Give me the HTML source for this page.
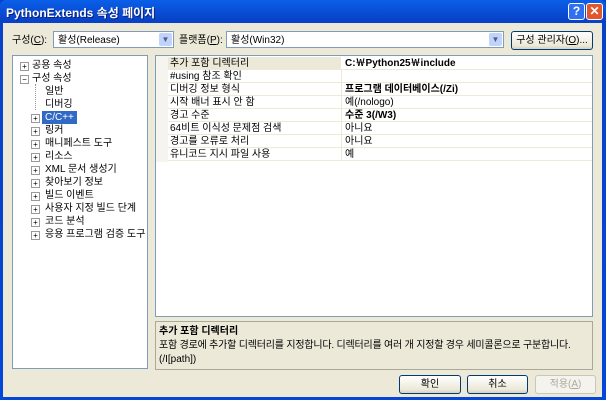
<!DOCTYPE html>
<html><head><meta charset="utf-8"><style>
*{box-sizing:border-box;margin:0;padding:0}
body{width:606px;height:400px;overflow:hidden;font:10px "Liberation Sans","Noto Sans CJK KR",sans-serif;color:#000;background:#0842c8}
.win{position:absolute;left:0;top:0;width:606px;height:400px;background:linear-gradient(#0a5fe8,#0842c8 20px,#0446d8);border-radius:6px 6px 0 0}
.title{position:absolute;left:6px;top:4px;color:#fff;font-weight:bold;font-size:12px;text-shadow:1px 1px #0a1f7a}
.tb{position:absolute;top:3px;width:17px;height:17px;border:1px solid #fff;border-radius:3px;color:#fff;font-weight:bold;text-align:center;line-height:15px;font-size:12px}
.body{position:absolute;left:3px;top:23px;width:599px;height:374px;background:#ece9d8}
.a{position:absolute;white-space:nowrap;line-height:13px}
.combo{position:absolute;background:#fff;border:1px solid #7f9db9;height:17px;padding:1px 4px;line-height:15px;white-space:nowrap}
.dd{position:absolute;right:1px;top:1px;width:13px;height:13px;background:#c1d3fb;border-radius:2px;color:#4d6185;font-size:8px;text-align:center;line-height:13px}
.btn{position:absolute;border:1px solid #003c74;border-radius:3px;background:linear-gradient(#fff,#ece9d8 80%,#d6d0c0);text-align:center;line-height:17px;height:19px;white-space:nowrap}
.panel{position:absolute;background:#fff;border:1px solid #7f9db9}
.ti{position:absolute;height:13px;line-height:13px;white-space:nowrap}
.pl{position:absolute;width:9px;height:9px;border:1px solid #9a9a9a;background:#fff;font-size:8px;line-height:7px;text-align:center;color:#000}
.row{position:absolute;left:12px;right:0;height:13px;border-bottom:1px solid #ece9d8;line-height:14px;white-space:nowrap}
.row span{position:absolute;left:0;padding-left:2px}
.row b{position:absolute;left:173px;padding-left:3px;border-left:1px solid #ece9d8;height:12px}
</style></head><body><div class="win">
<div class="title">PythonExtends 속성 페이지</div>
<div class="tb" style="left:568px;background:#2f6ff0">?</div>
<div class="tb" style="left:586px;background:#e0572e">✕</div>
<div class="body">
<div class="a" style="left:9px;top:11px">구성(<u>C</u>):</div>
<div class="combo" style="left:50px;top:8px;width:121px">활성(Release)<div class="dd">▼</div></div>
<div class="a" style="left:176px;top:11px">플랫폼(<u>P</u>):</div>
<div class="combo" style="left:223px;top:8px;width:278px">활성(Win32)<div class="dd">▼</div></div>
<div class="btn" style="left:508px;top:8px;width:82px">구성 관리자(<u>O</u>)...</div>

<div class="panel" style="left:9px;top:32px;width:136px;height:314px">
<div class="pl" style="left:7px;top:6px">+</div><div class="ti" style="left:19px;top:3px">공용 속성</div>
<div class="pl" style="left:7px;top:19px">−</div><div class="ti" style="left:19px;top:16px">구성 속성</div>
<div class="a" style="left:22px;top:28px;width:1px;height:26px;border-left:1px dotted #999"></div>
<div class="ti" style="left:32px;top:29px">일반</div>
<div class="ti" style="left:32px;top:42px">디버깅</div>
<div class="pl" style="left:18px;top:58px">+</div><div class="ti" style="left:29px;top:55px;background:#316ac5;color:#fff;padding:0 3px">C/C++</div>
<div class="pl" style="left:18px;top:71px">+</div><div class="ti" style="left:32px;top:68px">링커</div>
<div class="pl" style="left:18px;top:84px">+</div><div class="ti" style="left:32px;top:81px">매니페스트 도구</div>
<div class="pl" style="left:18px;top:97px">+</div><div class="ti" style="left:32px;top:94px">리소스</div>
<div class="pl" style="left:18px;top:110px">+</div><div class="ti" style="left:32px;top:107px">XML 문서 생성기</div>
<div class="pl" style="left:18px;top:123px">+</div><div class="ti" style="left:32px;top:120px">찾아보기 정보</div>
<div class="pl" style="left:18px;top:136px">+</div><div class="ti" style="left:32px;top:133px">빌드 이벤트</div>
<div class="pl" style="left:18px;top:149px">+</div><div class="ti" style="left:32px;top:146px">사용자 지정 빌드 단계</div>
<div class="pl" style="left:18px;top:162px">+</div><div class="ti" style="left:32px;top:159px">코드 분석</div>
<div class="pl" style="left:18px;top:175px">+</div><div class="ti" style="left:32px;top:172px">응용 프로그램 검증 도구</div>
</div>

<div class="panel" style="left:152px;top:32px;width:438px;height:262px">
<div class="a" style="left:0;top:0;width:12px;height:106px;background:#f5f4ee"></div>
<div class="row" style="top:1px;background:#ece9d8"><span>추가 포함 디렉터리</span><b style="background:#fff;border-color:#fff;font-weight:bold;right:0">C:￦Python25￦include</b></div>
<div class="row" style="top:14px"><span>#using 참조 확인</span><b></b></div>
<div class="row" style="top:27px"><span>디버깅 정보 형식</span><b style="font-weight:bold">프로그램 데이터베이스(/Zi)</b></div>
<div class="row" style="top:40px"><span>시작 배너 표시 안 함</span><b style="font-weight:normal">예(/nologo)</b></div>
<div class="row" style="top:53px"><span>경고 수준</span><b style="font-weight:bold">수준 3(/W3)</b></div>
<div class="row" style="top:66px"><span>64비트 이식성 문제점 검색</span><b style="font-weight:normal">아니요</b></div>
<div class="row" style="top:79px"><span>경고를 오류로 처리</span><b style="font-weight:normal">아니요</b></div>
<div class="row" style="top:92px"><span>유니코드 지시 파일 사용</span><b style="font-weight:normal">예</b></div>
</div>

<div class="a" style="left:152px;top:298px;width:438px;height:49px;border:1px solid #aca899">
<div class="a" style="left:3px;top:3px;font-weight:bold">추가 포함 디렉터리</div>
<div class="a" style="left:3px;top:17px;letter-spacing:-0.2px">포함 경로에 추가할 디렉터리를 지정합니다. 디렉터리를 여러 개 지정할 경우 세미콜론으로 구분합니다.</div>
<div class="a" style="left:3px;top:31px">(/I[path])</div>
</div>
<div class="btn" style="left:396px;top:352px;width:62px">확인</div>
<div class="btn" style="left:464px;top:352px;width:61px">취소</div>
<div class="btn" style="left:532px;top:352px;width:61px;border-color:#c9c7ba;color:#aca899;background:#f4f3ee">적용(<u>A</u>)</div>
</div></div></body></html>
